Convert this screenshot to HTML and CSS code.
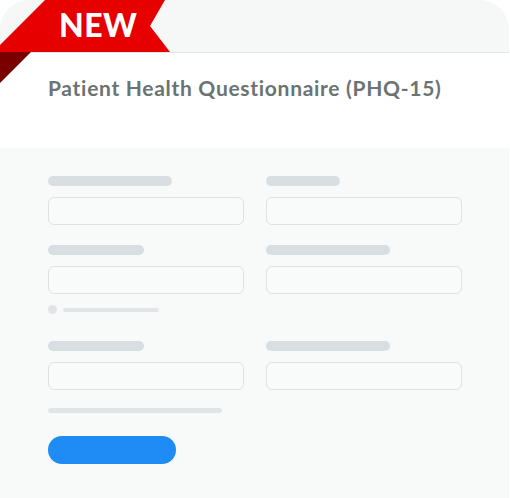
FILE: index.html
```html
<!DOCTYPE html>
<html>
<head>
<meta charset="utf-8">
<link rel="stylesheet" href="styles.css">
</head>
<body>
<div class="card">
  <div class="card-top"></div>
  <div class="title-section">
    <h1 class="title">Patient Health Questionnaire (PHQ-15)</h1>
  </div>
  <div class="form">
    <div class="row">
      <div class="field"><div class="label w124"></div><div class="input"></div></div>
      <div class="field"><div class="label w74"></div><div class="input"></div></div>
    </div>
    <div class="row row-2">
      <div class="field"><div class="label w96"></div><div class="input"></div></div>
      <div class="field"><div class="label w124"></div><div class="input"></div></div>
    </div>
    <div class="help">
      <span class="help-dot"></span><span class="help-line"></span>
    </div>
    <div class="row row-3">
      <div class="field"><div class="label w96"></div><div class="input"></div></div>
      <div class="field"><div class="label w124"></div><div class="input"></div></div>
    </div>
    <div class="note-line"></div>
    <div class="button"></div>
  </div>
  <div class="ribbon">
    <svg class="ribbon-shape" width="172" height="84" viewBox="0 0 172 84">
      <polygon points="0,45 45,0 165,0 150,26 170,52 0,52" fill="#e60000"/>
      <polygon points="0,52 31,52 0,83" fill="#7a0000"/>
    </svg>
    <span class="ribbon-text">NEW</span>
  </div>
</div>
</body>
</html>
```

FILE: styles.css
```css
html, body {
  margin: 0;
  padding: 0;
  background: #ffffff;
}

.card {
  position: relative;
  width: 509px;
  height: 498px;
  border-radius: 30px 30px 0 0;
  overflow: hidden;
  background: #f8f9f9;
  display: flex;
  flex-direction: column;
}

.card-top {
  height: 52px;
  background: #f6f8f8;
  border-bottom: 1px solid #e2e7ea;
  flex-shrink: 0;
}

.title-section {
  background: #ffffff;
  height: 95px;
  padding-left: 48px;
  flex-shrink: 0;
}

.title {
  margin: 0;
  padding-top: 22px;
  font-family: Lato, "Open Sans", sans-serif;
  font-weight: 700;
  font-size: 21px;
  line-height: 26px;
  color: #6b7373;
  letter-spacing: 0.7px;
}

.form {
  padding: 28px 48px 0 48px;
  display: flex;
  flex-direction: column;
}

.row {
  display: grid;
  grid-template-columns: 196px 196px;
  column-gap: 22px;
}

.row-2 { margin-top: 20px; }
.row-3 { margin-top: 27px; }

.field {
  display: flex;
  flex-direction: column;
}

.label {
  height: 10px;
  border-radius: 5px;
  background: #d8dee1;
}

.w124 { width: 124px; }
.w96 { width: 96px; }
.w74 { width: 74px; }

.input {
  margin-top: 11px;
  height: 26px;
  border: 1px solid #dce2e5;
  border-radius: 6px;
  background: #f9fafa;
}

.help {
  margin-top: 11px;
  display: flex;
  align-items: center;
  gap: 6px;
  height: 9px;
}

.help-dot {
  width: 9px;
  height: 9px;
  border-radius: 50%;
  background: #e0e4e6;
}

.help-line {
  width: 96px;
  height: 4px;
  border-radius: 2px;
  background: #e1e5e7;
}

.note-line {
  margin-top: 18px;
  width: 174px;
  height: 5px;
  border-radius: 3px;
  background: #e1e5e7;
}

.button {
  margin-top: 23px;
  width: 128px;
  height: 28px;
  border-radius: 14px;
  background: #1e8cf4;
}

.ribbon {
  position: absolute;
  left: 0;
  top: 0;
  width: 172px;
  height: 84px;
}

.ribbon-shape {
  display: block;
}

.ribbon-text {
  position: absolute;
  left: 59px;
  top: 5px;
  font-family: Lato, "Open Sans", sans-serif;
  font-weight: 900;
  font-size: 32px;
  line-height: 40px;
  color: #ffffff;
  letter-spacing: 0.5px;
}
```
